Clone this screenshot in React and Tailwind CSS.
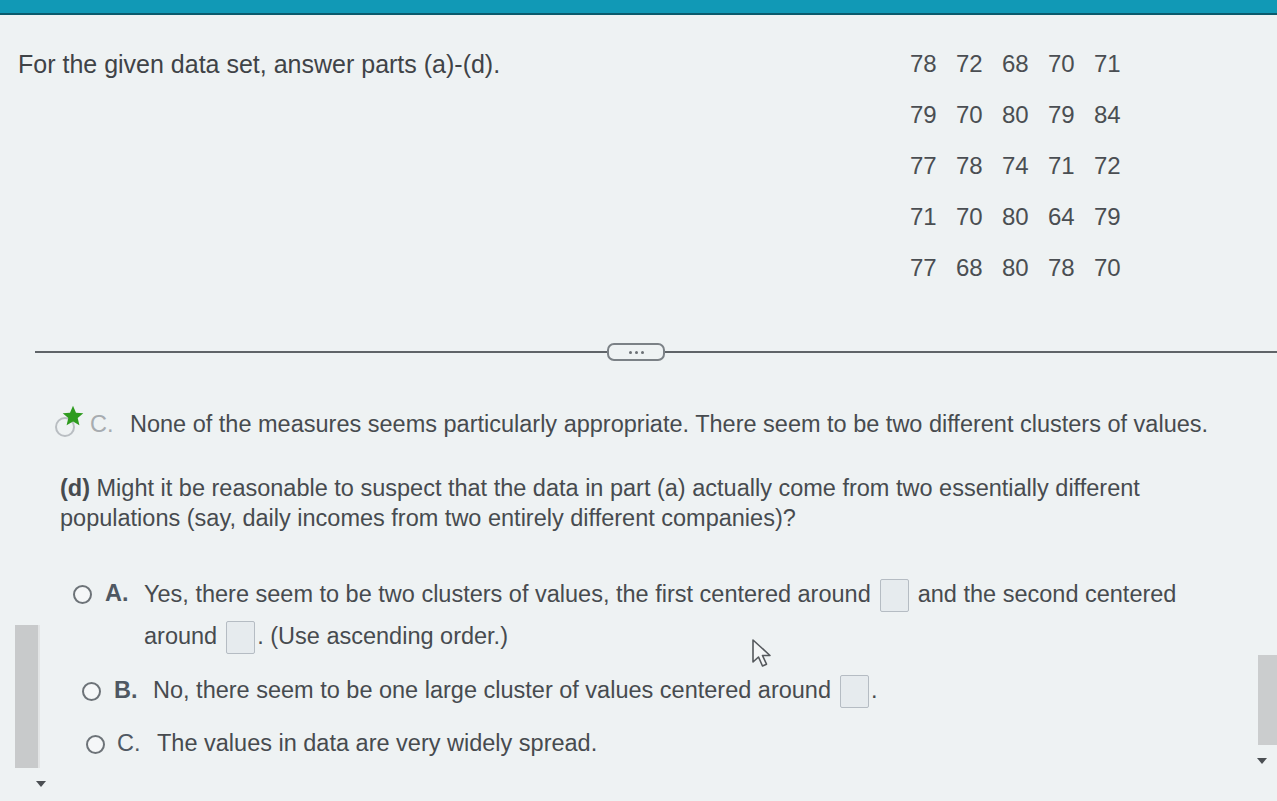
import React from 'react';

const rows = [
  ['78', '72', '68', '70', '71'],
  ['79', '70', '80', '79', '84'],
  ['77', '78', '74', '71', '72'],
  ['71', '70', '80', '64', '79'],
  ['77', '68', '80', '78', '70'],
];

const Radio = () => (
  <span className="inline-block w-[19px] h-[19px] rounded-full border-2 border-[#6d7378] bg-[#f5f7f8] shrink-0" />
);

// answer input box; tight = punctuation follows right after it
const Box = ({ tight }) => (
  <span
    className={
      tight
        ? 'inline-block align-middle w-[29px] h-[33px] ml-[9px] mr-[2px] border border-[#b5bcc3] bg-[#e6ebee] rounded-[2px]'
        : 'inline-block align-middle w-[29px] h-[33px] mx-[9px] border border-[#b5bcc3] bg-[#e6ebee] rounded-[2px]'
    }
  />
);

const Star = () => (
  <svg width="24" height="24" viewBox="0 0 24 24" className="absolute left-[6px] top-[-7px]">
    <path d="M12 1.8l3 6.9 7.3.6-5.6 4.8 1.7 7.2L12 17.5l-6.4 3.8 1.7-7.2L1.7 9.3 9 8.7z" fill="#2e9b1f" />
  </svg>
);

const Cursor = () => (
  <svg width="26" height="30" viewBox="0 0 26 30" className="absolute left-[750px] top-[638px]">
    <path d="M3 2v22l5.5-5 4 9 4-1.8-4-8.7h7.5z" fill="#f4f6f7" stroke="#55595d" strokeWidth="1.6" strokeLinejoin="round" />
  </svg>
);

export default function App() {
  return (
    <div
      className="relative w-[1277px] h-[801px] overflow-hidden bg-[#eef2f3] text-[#474b4f]"
      style={{ fontFamily: '"Liberation Sans", Arial, sans-serif' }}
    >
      {/* top header strip */}
      <div className="h-[15px] bg-[#1199b6] border-b-2 border-[#0b5a6c]" />

      {/* question + data */}
      <div className="flex items-start pl-[18px] pt-[23px]">
        <div className="w-[892px] mt-[12px] text-[25px] leading-[28px] text-[#3f4347]">
          For the given data set, answer parts (a)-(d).
        </div>
        <div className="text-[24px] text-[#4a4e52]">
          {rows.map((r, i) => (
            <div key={i} className="flex h-[51px] items-center">
              {r.map((n, j) => (
                <span key={j} className="w-[46px]">{n}</span>
              ))}
            </div>
          ))}
        </div>
      </div>

      {/* divider with expand pill */}
      <div className="flex items-center pl-[35px] mt-[50px]">
        <div className="w-[572px] h-[2px] bg-[#5f6468]" />
        <div className="w-[58px] h-[18px] rounded-[7px] border-2 border-[#7b8186] bg-[#eef2f3] flex items-center justify-center gap-[3px]">
          <span className="w-[3px] h-[3px] bg-[#6b7075] rounded-full" />
          <span className="w-[3px] h-[3px] bg-[#6b7075] rounded-full" />
          <span className="w-[3px] h-[3px] bg-[#6b7075] rounded-full" />
        </div>
        <div className="flex-1 h-[2px] bg-[#5f6468]" />
      </div>

      {/* previous part answer */}
      <div className="flex items-center pl-[55px] mt-[50px] h-[28px] text-[23.5px]">
        <span className="relative w-[35px] h-[28px]">
          <span className="absolute left-0 top-[6px] w-[20px] h-[20px] rounded-full border-2 border-[#b9bec2]" />
          <Star />
        </span>
        <span className="w-[40px] text-[#a7acb0]">C.</span>
        <span>None of the measures seems particularly appropriate. There seem to be two different clusters of values.</span>
      </div>

      {/* part d */}
      <div className="pl-[60px] mt-[34px] text-[23.5px] leading-[30px] w-[1200px]">
        <span className="font-bold">(d)</span> Might it be reasonable to suspect that the data in part (a) actually come from two essentially different
        <br />
        populations (say, daily incomes from two entirely different companies)?
      </div>

      {/* options */}
      <div className="mt-[40px] text-[23.5px]">
        <div className="flex items-start pl-[73px]">
          <span className="h-[42px] flex items-center"><Radio /></span>
          <span className="w-[52px] h-[42px] flex items-center pl-[13px] font-semibold text-[#4f5862]">A.</span>
          <div className="leading-[42px]">
            <div className="whitespace-nowrap">Yes, there seem to be two clusters of values, the first centered around<Box />and the second centered</div>
            <div>around<Box tight />. (Use ascending order.)</div>
          </div>
        </div>

        <div className="flex items-center pl-[82px] mt-[13px] h-[42px]">
          <Radio />
          <span className="w-[52px] pl-[13px] font-semibold text-[#4f5862]">B.</span>
          <span>No, there seem to be one large cluster of values centered around</span>
          <Box tight />
          <span>.</span>
        </div>

        <div className="flex items-center pl-[86px] mt-[11px] h-[42px]">
          <Radio />
          <span className="w-[52px] pl-[12px] text-[#4f5862]">C.</span>
          <span>The values in data are very widely spread.</span>
        </div>
      </div>

      {/* scrollbars */}
      <div className="absolute left-[15px] top-[625px] w-[25px] h-[143px] bg-[#c8cacb] border-r-2 border-[#e2e4e5]" />
      <div className="absolute left-[36px] top-[781px] w-0 h-0 border-l-[5px] border-r-[5px] border-t-[6px] border-l-transparent border-r-transparent border-t-[#4b4f53]" />
      <div className="absolute left-[1258px] top-[655px] w-[19px] h-[90px] bg-[#cbcdce]" />
      <div className="absolute left-[1257px] top-[758px] w-0 h-0 border-l-[5px] border-r-[5px] border-t-[6px] border-l-transparent border-r-transparent border-t-[#4b4f53]" />

      <Cursor />
    </div>
  );
}
